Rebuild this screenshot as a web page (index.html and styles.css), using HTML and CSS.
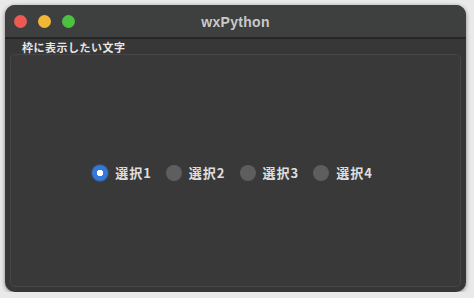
FILE: index.html
```html
<!DOCTYPE html>
<html lang="ja">

<head>
    <meta charset="utf-8">
    <title>wxPython</title>
    <link rel="stylesheet" href="styles.css">
</head>

<body>
    <div class="window">
        <div class="titlebar">
            <div class="lights">
                <span class="light red"></span>
                <span class="light yellow"></span>
                <span class="light green"></span>
            </div>
            <div class="title">wxPython</div>
        </div>
        <div class="content">
            <div class="boxlabel">枠に表示したい文字</div>
            <div class="staticbox">
                <div class="radios">
                    <label class="radio"><span class="dot checked"></span>選択1</label>
                    <label class="radio"><span class="dot"></span>選択2</label>
                    <label class="radio"><span class="dot"></span>選択3</label>
                    <label class="radio"><span class="dot"></span>選択4</label>
                </div>
            </div>
        </div>
    </div>
</body>

</html>
```

FILE: styles.css
```css
body {
    margin: 0;
    background-color: #e9e9e9;
    font-family: "Noto Sans CJK JP", "Noto Sans", sans-serif;
}
.window {
    margin: 5px 0 0 5px;
    width: 461px;
    height: 287px;
    border-radius: 10px;
    background-color: #373737;
    box-shadow: 0 1px 4px rgba(0, 0, 0, 0.45);
    display: flex;
    flex-direction: column;
    overflow: hidden;
}
.titlebar {
    height: 32px;
    background-color: #3e3f3f;
    border-bottom: 2px solid #262626;
    position: relative;
    display: flex;
    align-items: center;
    justify-content: center;
}
.lights {
    position: absolute;
    left: 9px;
    top: 10px;
    display: flex;
    gap: 11px;
}
.light {
    width: 13px;
    height: 13px;
    border-radius: 50%;
}
.red {
    background-color: #ee5a52;
}
.yellow {
    background-color: #f2b833;
}
.green {
    background-color: #4cc23f;
}
.title {
    color: #c9c9c9;
    font-family: "Liberation Sans", sans-serif;
    font-weight: bold;
    font-size: 14px;
    letter-spacing: 0.3px;
    margin-top: 1px;
}
.content {
    flex: 1;
    display: flex;
    flex-direction: column;
    padding: 0 5px 5px 5px;
}
.boxlabel {
    color: #e6e6e6;
    font-size: 11px;
    font-weight: bold;
    letter-spacing: 0.5px;
    line-height: 14px;
    padding-left: 12px;
    margin-top: 1px;
}
.staticbox {
    flex: 1;
    border: 1px solid #474747;
    border-radius: 5px;
    background-color: #393939;
    display: flex;
    align-items: center;
    justify-content: center;
}
.radios {
    display: flex;
    gap: 14px;
    margin-right: 6px;
    margin-top: 4px;
}
.radio {
    display: flex;
    align-items: center;
    gap: 7px;
    color: #dedede;
    font-size: 13px;
    font-weight: bold;
    letter-spacing: 1px;
}
.dot {
    width: 16px;
    height: 16px;
    border-radius: 50%;
    background-color: #5e5e5e;
    box-sizing: border-box;
}
.dot.checked {
    background: radial-gradient(circle, #ffffff 0 3px, #3478d8 3.5px);
    box-shadow: 0 0 2px #3478d8;
}
```
